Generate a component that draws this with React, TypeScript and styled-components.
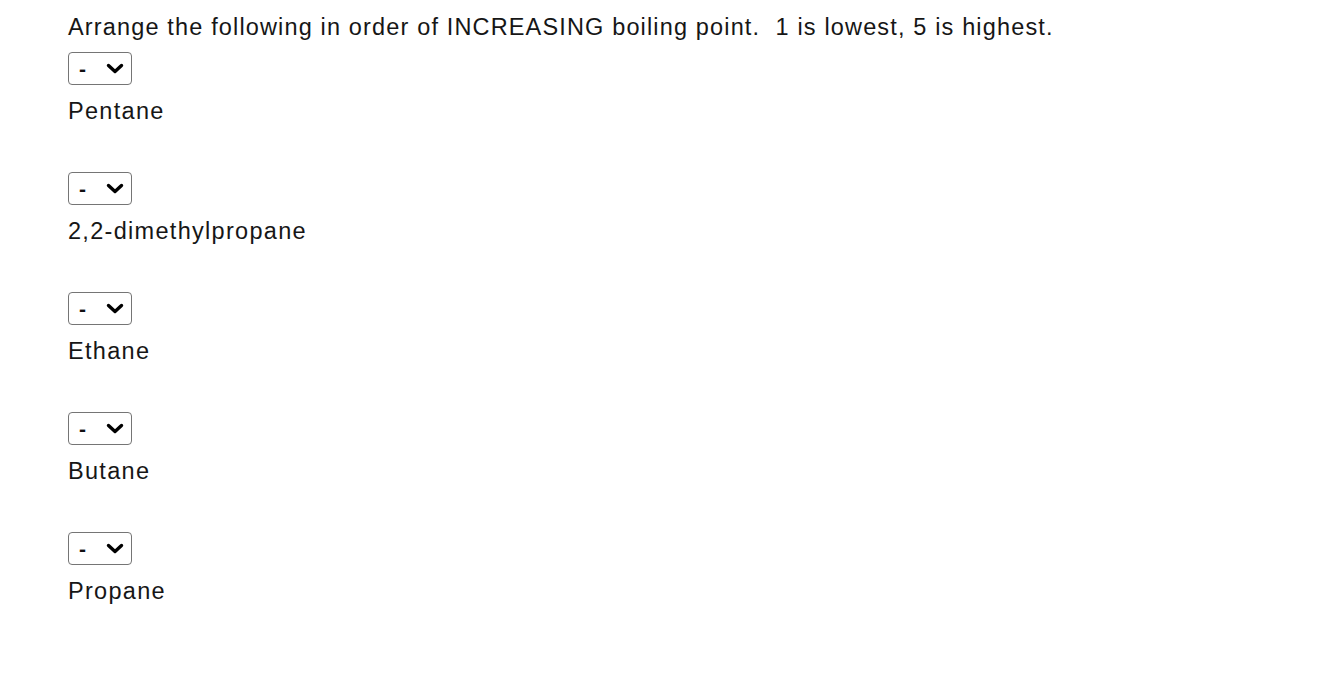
import React from 'react';
import styled, { createGlobalStyle } from 'styled-components';

const GlobalStyle = createGlobalStyle`
  html, body {
    margin: 0;
    padding: 0;
    background: #ffffff;
  }
  body {
    font-family: "Liberation Sans", Arial, Helvetica, sans-serif;
    color: #161616;
  }
`;

const Page = styled.div`
  padding: 12px 0 0 68px;
`;

const Prompt = styled.p`
  margin: 0 0 10px;
  font-size: 23.5px;
  line-height: 30px;
  letter-spacing: 1.15px;
  white-space: pre;
`;

const List = styled.div`
  display: flex;
  flex-direction: column;
  gap: 48px;
`;

const Item = styled.div`
  display: flex;
  flex-direction: column;
  align-items: flex-start;
  gap: 13px;
`;

const SelectWrap = styled.div`
  position: relative;
  width: 64px;
  height: 33px;
`;

const Select = styled.select`
  appearance: none;
  -webkit-appearance: none;
  width: 100%;
  height: 100%;
  margin: 0;
  padding: 0 0 0 10px;
  border: 1px solid #757575;
  border-radius: 4px;
  background: #ffffff;
  font-family: "Liberation Sans", Arial, sans-serif;
  font-size: 21px;
  font-weight: 700;
  color: #111;
  cursor: pointer;
`;

const Chevron = styled.svg`
  position: absolute;
  right: 8px;
  top: 11px;
  width: 18px;
  height: 11px;
  pointer-events: none;
`;

const Label = styled.div`
  font-size: 23.5px;
  line-height: 26px;
  letter-spacing: 1.3px;
`;

const compounds = ['Pentane', '2,2-dimethylpropane', 'Ethane', 'Butane', 'Propane'];

const RankSelect: React.FC = () => (
  <SelectWrap>
    <Select defaultValue="-">
      <option value="-">-</option>
      {[1, 2, 3, 4, 5].map((n) => (
        <option key={n} value={n}>
          {n}
        </option>
      ))}
    </Select>
    <Chevron viewBox="0 0 18 11">
      <path d="M2.5 2.5 L9 8.5 L15.5 2.5" fill="none" stroke="#000" strokeWidth="3.4" strokeLinecap="round" strokeLinejoin="round" />
    </Chevron>
  </SelectWrap>
);

const App: React.FC = () => (
  <>
    <GlobalStyle />
    <Page>
      <Prompt>Arrange the following in order of INCREASING boiling point.  1 is lowest, 5 is highest.</Prompt>
      <List>
        {compounds.map((name) => (
          <Item key={name}>
            <RankSelect />
            <Label>{name}</Label>
          </Item>
        ))}
      </List>
    </Page>
  </>
);

export default App;
